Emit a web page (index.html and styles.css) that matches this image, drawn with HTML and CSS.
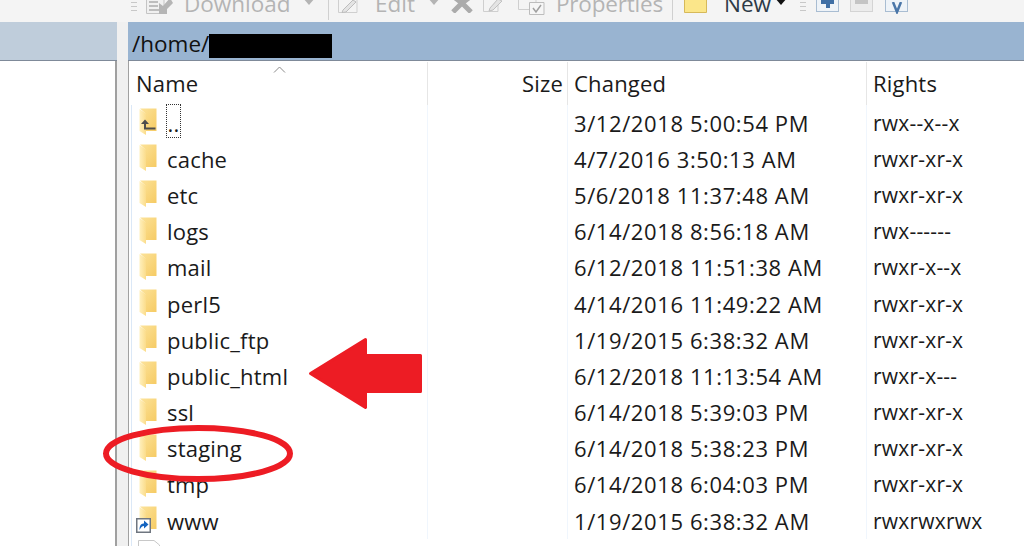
FILE: index.html
```html
<!DOCTYPE html>
<html>
<head>
    <title>Remote files</title>
    <link rel="stylesheet" href="styles.css">
</head>
<body>
    <svg class="defs" width="0" height="0">
        <defs>
            <linearGradient id="folderBack" x1="0" x2="1" y1="0" y2="1">
                <stop offset="0" stop-color="#fce39a"/>
                <stop offset="1" stop-color="#f6cb64"/>
            </linearGradient>
            <linearGradient id="folderFlap" x1="0" x2="1" y1="0" y2="0">
                <stop offset="0" stop-color="#fff0bd"/>
                <stop offset="1" stop-color="#fbdc8a"/>
            </linearGradient>
            <symbol id="folder" viewBox="0 0 18 27">
                <path d="M1 0.5 H17.5 V23 H7 V6 Z" fill="url(#folderBack)"/>
                <path d="M0.5 1 L7 5.5 V27 L0.5 23 Z" fill="url(#folderFlap)"/>
            </symbol>
        </defs>
    </svg>

    <div class="toolbar">
        <div class="grip grip-first"></div>
        <svg class="tool-doc" width="27" height="14" viewBox="0 0 27 14">
            <path d="M0.5 -2 H18 V13.5 H0.5 Z" fill="#f0f0f0" stroke="#c4c4c4"/>
            <path d="M3 2 H12 M3 6 H12 M3 10 H15" stroke="#bdbdbd" stroke-width="2"/>
            <path d="M13 3 L17 6 L24 -2 L27 3 L21 9 V14 H13 Z" fill="#b5b5b5"/>
        </svg>
        <span class="tool-text download">Download</span>
        <span class="caret caret-download"></span>
        <div class="sep sep-a"></div>
        <svg class="tool-pencil" width="22" height="13" viewBox="0 0 22 13">
            <path d="M0.5 -2 H19 V12.5 H0.5 Z" fill="#f4f4f4" stroke="#cfcfcf"/>
            <path d="M5 10 L15 0 L18 2 L8 12 L4 12.5 Z" fill="#e4e4e4" stroke="#bdbdbd"/>
        </svg>
        <span class="tool-text edit">Edit</span>
        <span class="caret caret-edit"></span>
        <svg class="tool-x" width="24" height="13" viewBox="0 0 24 13">
            <path d="M4 -3 L12 3 L20 -3 M3 12 L12 3 L21 12" fill="none" stroke="#ababab" stroke-width="5"/>
        </svg>
        <svg class="tool-copy" width="22" height="12" viewBox="0 0 22 12">
            <path d="M0.5 -2 H15 V11.5 H0.5 Z" fill="#f4f4f4" stroke="#cfcfcf"/>
            <path d="M7 8 L15 -1 L19 1 L10 10 L6 11 Z" fill="#e4e4e4" stroke="#c0c0c0"/>
        </svg>
        <svg class="tool-props" width="27" height="15" viewBox="0 0 27 15">
            <path d="M0.5 -2 H18 V9.5 H0.5 Z" fill="#f4f4f4" stroke="#cfcfcf"/>
            <path d="M11.5 2.5 H26 V14.5 H11.5 Z" fill="#f6f6f6" stroke="#bdbdbd"/>
            <path d="M15 8 L18 12 L23 5" fill="none" stroke="#a0a0a0" stroke-width="1.5"/>
        </svg>
        <span class="tool-text properties">Properties</span>
        <div class="sep sep-b"></div>
        <svg class="tool-folder" width="23" height="13" viewBox="0 0 23 13">
            <path d="M0.5 -2 H22.5 V12.5 H0.5 Z" fill="#fbe68a" stroke="#d6b95a"/>
        </svg>
        <span class="tool-text new">New</span>
        <span class="caret caret-new"></span>
        <div class="grip grip-second"></div>
        <div class="box box-plus"><span class="plus-h"></span><span class="plus-v"></span></div>
        <div class="box box-minus"><span class="minus-bar"></span></div>
        <div class="box box-v">
            <svg width="12" height="12" viewBox="0 0 12 12"><path d="M2 0 L6 10 L10 0" fill="none" stroke="#4a76a8" stroke-width="2.5"/></svg>
        </div>
    </div>

    <div class="panes">
        <div class="pane-left">
            <div class="path-bar path-bar-idle"></div>
            <div class="left-list"></div>
        </div>
        <div class="pane-right">
            <div class="path-bar">/home/<span class="redacted"></span></div>
            <div class="file-list">
                <div class="row head">
                    <div class="cell name">Name<svg class="sort-arrow" width="13" height="7" viewBox="0 0 13 7"><path d="M1 6.5 L6.5 1 L12 6.5" fill="none" stroke="#8a8a8a"/></svg></div>
                    <div class="cell size">Size</div>
                    <div class="cell">Changed</div>
                    <div class="cell">Rights</div>
                </div>
                <div class="row">
                    <div class="cell name">
                        <span class="icon">
                            <svg class="folder"><use href="#folder"/></svg>
                            <svg class="up-arrow" width="16" height="12" viewBox="0 0 16 12"><path d="M5 0.5 L1 5 H4 V10.5 H15.5 V8.5 H6 V5 H9 Z" fill="#4d4d4d"/></svg>
                        </span>
                        <span class="parent-link">..</span>
                    </div>
                    <div class="cell size"></div>
                    <div class="cell changed">3/12/2018 5:00:54 PM</div>
                    <div class="cell rights">rwx--x--x</div>
                </div>
                <div class="row">
                    <div class="cell name"><span class="icon"><svg class="folder"><use href="#folder"/></svg></span>cache</div>
                    <div class="cell size"></div>
                    <div class="cell changed">4/7/2016 3:50:13 AM</div>
                    <div class="cell rights">rwxr-xr-x</div>
                </div>
                <div class="row">
                    <div class="cell name"><span class="icon"><svg class="folder"><use href="#folder"/></svg></span>etc</div>
                    <div class="cell size"></div>
                    <div class="cell changed">5/6/2018 11:37:48 AM</div>
                    <div class="cell rights">rwxr-xr-x</div>
                </div>
                <div class="row">
                    <div class="cell name"><span class="icon"><svg class="folder"><use href="#folder"/></svg></span>logs</div>
                    <div class="cell size"></div>
                    <div class="cell changed">6/14/2018 8:56:18 AM</div>
                    <div class="cell rights">rwx------</div>
                </div>
                <div class="row">
                    <div class="cell name"><span class="icon"><svg class="folder"><use href="#folder"/></svg></span>mail</div>
                    <div class="cell size"></div>
                    <div class="cell changed">6/12/2018 11:51:38 AM</div>
                    <div class="cell rights">rwxr-x--x</div>
                </div>
                <div class="row">
                    <div class="cell name"><span class="icon"><svg class="folder"><use href="#folder"/></svg></span>perl5</div>
                    <div class="cell size"></div>
                    <div class="cell changed">4/14/2016 11:49:22 AM</div>
                    <div class="cell rights">rwxr-xr-x</div>
                </div>
                <div class="row">
                    <div class="cell name"><span class="icon"><svg class="folder"><use href="#folder"/></svg></span>public_ftp</div>
                    <div class="cell size"></div>
                    <div class="cell changed">1/19/2015 6:38:32 AM</div>
                    <div class="cell rights">rwxr-xr-x</div>
                </div>
                <div class="row">
                    <div class="cell name"><span class="icon"><svg class="folder"><use href="#folder"/></svg></span>public_html</div>
                    <div class="cell size"></div>
                    <div class="cell changed">6/12/2018 11:13:54 AM</div>
                    <div class="cell rights">rwxr-x---</div>
                </div>
                <div class="row">
                    <div class="cell name"><span class="icon"><svg class="folder"><use href="#folder"/></svg></span>ssl</div>
                    <div class="cell size"></div>
                    <div class="cell changed">6/14/2018 5:39:03 PM</div>
                    <div class="cell rights">rwxr-xr-x</div>
                </div>
                <div class="row">
                    <div class="cell name"><span class="icon"><svg class="folder"><use href="#folder"/></svg></span>staging</div>
                    <div class="cell size"></div>
                    <div class="cell changed">6/14/2018 5:38:23 PM</div>
                    <div class="cell rights">rwxr-xr-x</div>
                </div>
                <div class="row">
                    <div class="cell name"><span class="icon"><svg class="folder"><use href="#folder"/></svg></span>tmp</div>
                    <div class="cell size"></div>
                    <div class="cell changed">6/14/2018 6:04:03 PM</div>
                    <div class="cell rights">rwxr-xr-x</div>
                </div>
                <div class="row">
                    <div class="cell name">
                        <span class="icon">
                            <svg class="folder"><use href="#folder"/></svg>
                            <svg class="shortcut" width="15" height="15" viewBox="0 0 15 15">
                                <rect x="0.75" y="0.75" width="13.5" height="13.5" fill="#fff" stroke="#6f7680" stroke-width="1.5"/>
                                <path d="M3.5 12 C3.5 7.5 5 5.5 8 5.5 V2.5 L12.5 6.5 L8 10.5 V8 C6 8 5 9.5 3.5 12 Z" fill="#1464c0"/>
                            </svg>
                        </span>www
                    </div>
                    <div class="cell size"></div>
                    <div class="cell changed">1/19/2015 6:38:32 AM</div>
                    <div class="cell rights">rwxrwxrwx</div>
                </div>
                <div class="row">
                    <div class="cell name">
                        <span class="icon">
                            <svg class="page" width="22" height="12" viewBox="0 0 22 12"><path d="M0.5 0.5 H16 L21.5 5 V12 H0.5 Z" fill="#fff" stroke="#c8c8c8"/></svg>
                        </span>
                    </div>
                </div>
            </div>
        </div>
    </div>

    <!-- red markup drawn on top of the screenshot -->
    <svg class="arrow-mark" width="116" height="75" viewBox="0 0 116 75">
        <path d="M57.5 3.5 L2.5 37.5 L57.5 71.5 V55.5 H112.5 V19.5 H57.5 Z" fill="#ed1c24" stroke="#ed1c24" stroke-width="3" stroke-linejoin="round"/>
    </svg>
    <svg class="ring-mark" width="196" height="62" viewBox="0 0 196 62">
        <ellipse cx="97" cy="30.5" rx="92" ry="25.5" fill="none" stroke="#ed1c24" stroke-width="6"/>
    </svg>
</body>
</html>
```

FILE: styles.css
```css
html, body {
    margin: 0;
    height: 100%;
}

body {
    width: 1024px;
    height: 546px;
    overflow: hidden;
    position: relative;
    background: #f0f0f0;
    font-family: "Open Sans", "Noto Sans", sans-serif;
    font-size: 22px;
    letter-spacing: 0.2px;
    color: #1a1a1a;
}

.defs {
    position: absolute;
}

/* toolbar, cut off by the top of the picture */
.toolbar {
    height: 22px;
    display: flex;
    align-items: flex-end;
    overflow: hidden;
    background: #f4f4f4;
    padding-left: 131px;
    box-sizing: border-box;
}

.toolbar > * {
    flex: none;
    margin-bottom: 8px;
}

.tool-text {
    font-size: 22.5px;
    letter-spacing: 0;
    line-height: 28px;
    margin-bottom: 4px;
    color: #b4b4b4;
}

.grip {
    width: 6px;
    height: 11px;
    background: repeating-linear-gradient(#c8c8c8 0 1px, transparent 1px 4px);
}

.toolbar .grip { margin-bottom: 9px; }
.grip-second { margin-left: 13px; }

.toolbar .caret {
    width: 0;
    height: 0;
    border: 6px solid transparent;
    border-top: 7px solid #b4b4b4;
    border-bottom: 0;
    margin-bottom: 17px;
}

.toolbar .sep {
    width: 1px;
    height: 20px;
    background: #d0d0d0;
    margin-bottom: 2px;
}

.tool-doc { margin-left: 9px; }
.download { margin-left: 11px; width: 106px; }
.caret-download { margin-left: 13px; }
.sep-a { margin-left: 13px; }
.toolbar .tool-pencil { margin-left: 9px; margin-bottom: 9px; }
.edit { margin-left: 15px; width: 40px; }
.caret-edit { margin-left: 13px; }
.toolbar .tool-x { margin-left: 10px; margin-bottom: 9px; }
.toolbar .tool-copy { margin-left: 9px; margin-bottom: 10px; }
.toolbar .tool-props { margin-left: 13px; margin-bottom: 7px; }
.properties { margin-left: 11px; width: 105px; letter-spacing: -0.2px; }
.sep-b { margin-left: 11px; }
.toolbar .tool-folder { margin-left: 11px; margin-bottom: 9px; }
.new { margin-left: 17px; width: 46px; color: #2d3a47; }
.caret-new { margin-left: 5px; }
.toolbar .caret-new { border-top-color: #111; }

.toolbar .box {
    width: 21px;
    height: 21px;
    border: 1px solid #a9bdd2;
    background: #eef3f8;
    position: relative;
    margin-bottom: 10px;
}

.box-plus { margin-left: 10px; }
.box-minus { margin-left: 11px; }
.box-v { margin-left: 12px; text-align: center; }
.box-v svg { margin-top: 9px; }

.toolbar .box-minus {
    border-color: #d4d4d4;
    background: #ececec;
}

.plus-h, .plus-v {
    position: absolute;
    background: #3f6fa5;
}

.plus-h { left: 4px; right: 4px; top: 10px; height: 4px; }
.plus-v { left: 9px; width: 4px; top: 0; height: 18px; }

.minus-bar {
    position: absolute;
    left: 4px;
    right: 4px;
    top: 10px;
    height: 4px;
    background: #c4c4c4;
}

/* two panes */
.panes {
    display: flex;
    height: 524px;
}

.pane-left {
    width: 117px;
    display: flex;
    flex-direction: column;
    margin-right: 11px;
}

.pane-right {
    flex: 1;
    display: flex;
    flex-direction: column;
}

.path-bar {
    height: 38px;
    flex: none;
    background: #99b4d1;
    border-bottom: 1px solid #7f8a99;
    font-size: 22.5px;
    letter-spacing: 0;
    line-height: 43px;
    padding-left: 4px;
    white-space: nowrap;
    color: #111;
}

.path-bar-idle {
    background: #bfcddb;
}

.redacted {
    display: inline-block;
    width: 123px;
    height: 24px;
    background: #000;
    vertical-align: -6px;
}

.left-list {
    flex: 1;
    background: #fff;
    border-right: 2px solid #a0a0a0;
}

.file-list {
    flex: 1;
    background: #fff;
    border-left: 1px solid #a0a0a0;
    overflow: hidden;
}

/* file rows */
.row {
    display: grid;
    grid-template-columns: 299px 140px 299px 1fr;
    height: 36.2px;
    line-height: 36px;
    white-space: nowrap;
}

.head {
    height: 43.5px;
    padding-top: 1px;
    box-sizing: border-box;
}

.head .cell {
    border-right-color: #e6e6e6;
}

.cell {
    padding-left: 6px;
    border-right: 1px solid #f0f6fd;
    position: relative;
    display: flex;
    align-items: center;
}

.cell:last-child {
    border-right: 0;
}

.cell.name {
    padding-left: 7px;
}

.row:not(.head) .cell.name {
    border-left: 1px solid #dbe8f7;
    margin-left: 2px;
    padding-left: 7px;
}

.cell.size {
    justify-content: flex-end;
    padding: 0 4px 0 0;
}

.cell.changed {
    letter-spacing: 0.6px;
}

.cell.rights {
    font-size: 21px;
}

.sort-arrow {
    position: absolute;
    left: 144px;
    top: 4px;
}

.icon {
    width: 28px;
    height: 27px;
    flex: none;
    position: relative;
    margin-bottom: 2px;
}

.folder {
    width: 18px;
    height: 27px;
    display: block;
}

.up-arrow {
    position: absolute;
    left: 1px;
    top: 11px;
}

.shortcut {
    position: absolute;
    left: -3px;
    top: 12px;
}

.page {
    position: absolute;
    left: -1px;
    top: -2px;
}

.parent-link {
    width: 13px;
    height: 32px;
    border: 1px dotted #333;
    line-height: 36px;
    text-align: center;
    margin-left: -1px;
    margin-top: -3px;
}

/* markup */
.arrow-mark {
    position: absolute;
    left: 308px;
    top: 336px;
}

.ring-mark {
    position: absolute;
    left: 101px;
    top: 423px;
}
```
